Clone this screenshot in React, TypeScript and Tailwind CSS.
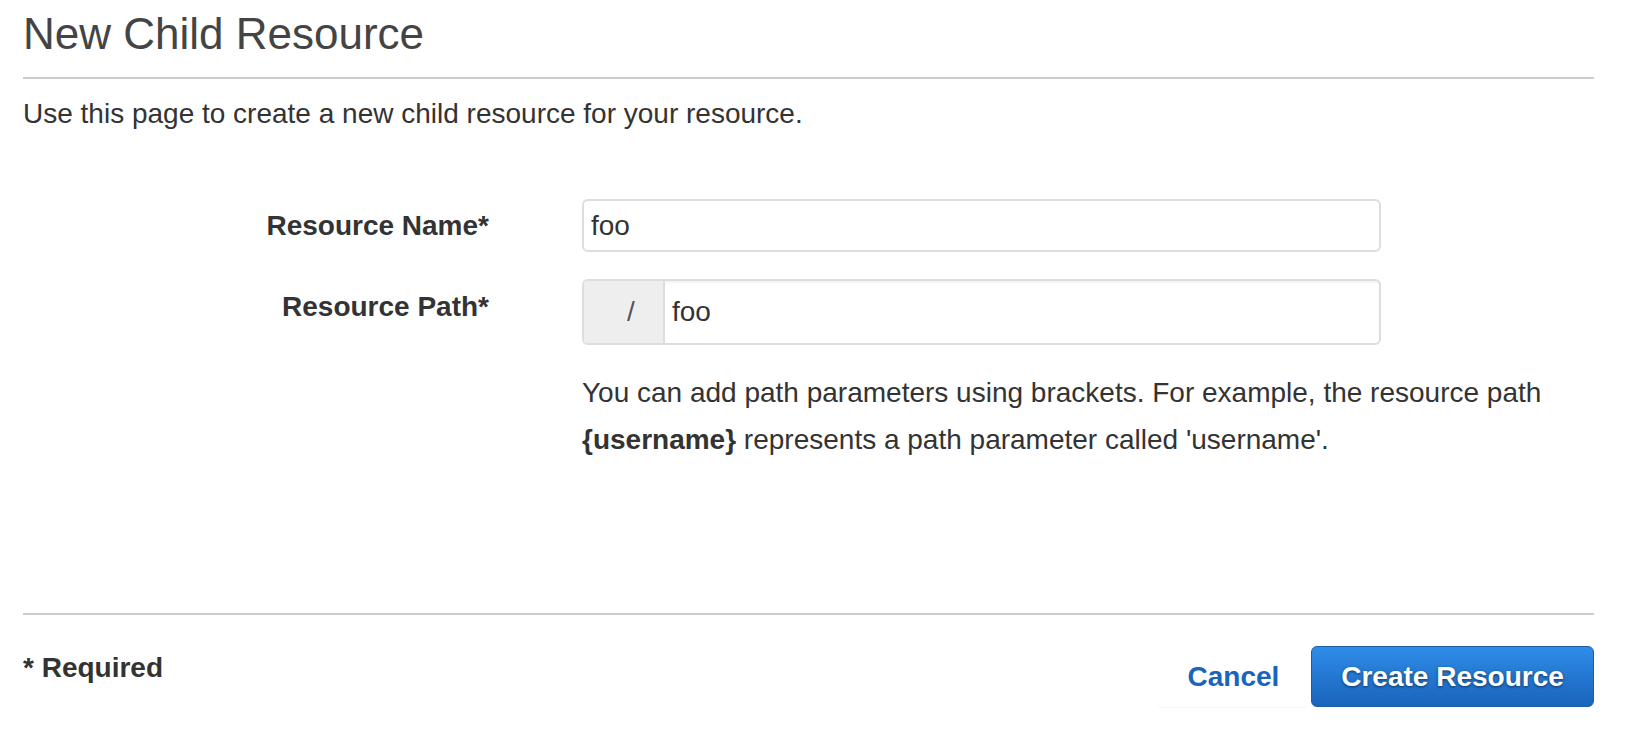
export default function App() {
  return (
    <div
      className="w-[1626px] h-[734px] overflow-hidden bg-white pl-[23px] pr-[32px] text-[28px] text-[#333333]"
      style={{ fontFamily: '"Liberation Sans", Arial, Helvetica, sans-serif' }}
    >
      {/* Header */}
      <h1 className="pt-[6px] text-[44px] leading-[56px] text-[#444444]">New Child Resource</h1>
      <div className="mt-[15px] h-[2px] bg-[#cccccc]" />
      <p className="mt-[17px] leading-[36px]">Use this page to create a new child resource for your resource.</p>

      {/* Form */}
      <div className="mt-[67px] flex flex-col">
        <div className="flex items-center">
          <label className="w-[466px] text-right font-bold leading-[36px]">Resource Name*</label>
          <input
            readOnly
            value="foo"
            className="ml-[93px] w-[799px] h-[53px] rounded-[6px] border-2 border-[#dddddd] bg-white pl-[7px] text-[#333333] outline-none"
          />
        </div>

        <div className="mt-[27px] flex items-start">
          <label className="w-[466px] pt-[10px] text-right font-bold leading-[36px]">Resource Path*</label>
          <div className="ml-[93px] w-[799px] flex flex-col">
            <div className="flex h-[66px] overflow-hidden rounded-[6px] border-2 border-[#dddddd] bg-white shadow-[inset_0_2px_2px_rgba(0,0,0,0.05)]">
              <span className="flex w-[81px] items-center border-r-2 border-[#dddddd] bg-[#eeeeee] pl-[43px] text-[#555555]">
                /
              </span>
              <input
                readOnly
                value="foo"
                className="flex-1 bg-transparent pl-[7px] text-[#333333] outline-none"
              />
            </div>
            <p className="mt-[24px] whitespace-nowrap leading-[47px]">
              You can add path parameters using brackets. For example, the resource path
              <br />
              <span className="font-bold">{'{username}'}</span> represents a path parameter called 'username'.
            </p>
          </div>
        </div>
      </div>

      <div className="mt-[150px] h-[2px] bg-[#cccccc]" />

      {/* Footer */}
      <div className="flex items-start justify-between">
        <div className="mt-[35px] font-bold leading-[36px]">* Required</div>
        <div className="mt-[31px] flex items-center">
          <button className="h-[61px] w-[153px] rounded-[6px] bg-white font-bold text-[#1a64bd] shadow-[0_1px_1px_rgba(0,0,0,0.04)]">
            Cancel
          </button>
          <button className="ml-[1px] h-[61px] w-[283px] rounded-[6px] border border-[#1b5ca6] bg-gradient-to-b from-[#2f8de9] to-[#1963bb] font-bold text-white [text-shadow:0_1px_3px_rgba(0,0,0,0.55)]">
            Create Resource
          </button>
        </div>
      </div>
    </div>
  )
}
